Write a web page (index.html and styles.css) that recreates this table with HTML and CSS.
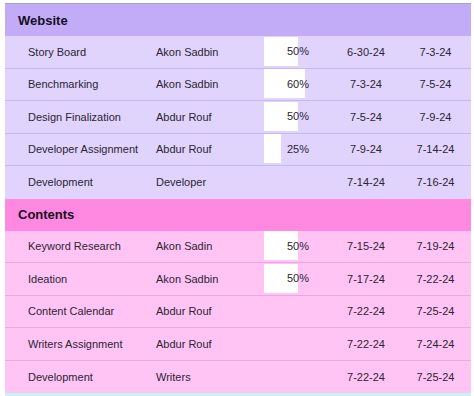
FILE: index.html
```html
<!DOCTYPE html>
<html>
<head>
<meta charset="utf-8">
<link rel="stylesheet" href="styles.css">
</head>
<body>
<div class="sheet">
  <section class="group website">
    <div class="group-head">Website</div>
    <div class="row"><span class="task">Story Board</span><span class="owner">Akon Sadbin</span><span class="prog"><span class="bar" style="width:50%"></span><span class="pct">50%</span></span><span class="date">6-30-24</span><span class="date">7-3-24</span></div>
    <div class="row"><span class="task">Benchmarking</span><span class="owner">Akon Sadbin</span><span class="prog"><span class="bar" style="width:60%"></span><span class="pct">60%</span></span><span class="date">7-3-24</span><span class="date">7-5-24</span></div>
    <div class="row"><span class="task">Design Finalization</span><span class="owner">Abdur Rouf</span><span class="prog"><span class="bar" style="width:50%"></span><span class="pct">50%</span></span><span class="date">7-5-24</span><span class="date">7-9-24</span></div>
    <div class="row"><span class="task">Developer Assignment</span><span class="owner">Abdur Rouf</span><span class="prog"><span class="bar" style="width:25%"></span><span class="pct">25%</span></span><span class="date">7-9-24</span><span class="date">7-14-24</span></div>
    <div class="row"><span class="task">Development</span><span class="owner">Developer</span><span class="prog"></span><span class="date">7-14-24</span><span class="date">7-16-24</span></div>
  </section>
  <section class="group contents">
    <div class="group-head">Contents</div>
    <div class="row"><span class="task">Keyword Research</span><span class="owner">Akon Sadin</span><span class="prog"><span class="bar" style="width:50%"></span><span class="pct">50%</span></span><span class="date">7-15-24</span><span class="date">7-19-24</span></div>
    <div class="row"><span class="task">Ideation</span><span class="owner">Akon Sadbin</span><span class="prog"><span class="bar" style="width:50%"></span><span class="pct">50%</span></span><span class="date">7-17-24</span><span class="date">7-22-24</span></div>
    <div class="row"><span class="task">Content Calendar</span><span class="owner">Abdur Rouf</span><span class="prog"></span><span class="date">7-22-24</span><span class="date">7-25-24</span></div>
    <div class="row"><span class="task">Writers Assignment</span><span class="owner">Abdur Rouf</span><span class="prog"></span><span class="date">7-22-24</span><span class="date">7-24-24</span></div>
    <div class="row"><span class="task">Development</span><span class="owner">Writers</span><span class="prog"></span><span class="date">7-22-24</span><span class="date">7-25-24</span></div>
  </section>
  <div class="next"></div>
</div>
</body>
</html>
```

FILE: styles.css
```css
html, body {
  margin: 0;
  padding: 0;
  background: #ffffff;
}
body {
  font-family: "Liberation Sans", Arial, sans-serif;
  color: #2a2434;
  width: 474px;
  height: 396px;
  overflow: hidden;
}
.sheet {
  margin: 0 3px 0 5px;
  padding-top: 3px;
}
.group-head {
  height: 33px;
  box-sizing: border-box;
  padding-left: 13px;
  display: flex;
  align-items: center;
  font-size: 13px;
  font-weight: bold;
  color: #16101e;
}
.website .group-head {
  background: #c2acf8;
  border-top: 1px solid #a9a4b4;
}
.contents .group-head {
  background: #ff88e0;
  height: 32px;
}
.row {
  display: grid;
  grid-template-columns: 128px 108px 68px 68px 71px;
  padding-left: 23px;
  height: 32.5px;
  box-sizing: border-box;
  align-items: center;
  font-size: 11px;
}
.website .row {
  background: #e0d4fc;
  border-bottom: 1px solid #c8b8f0;
}
.website .row:last-child {
  border-bottom: none;
}
.contents .row {
  background: #ffc4f4;
  border-bottom: 1px solid #f0a6e2;
}
.contents .row:last-child {
  border-bottom: none;
}
.prog {
  position: relative;
  height: 29px;
  display: flex;
  align-items: center;
  justify-content: center;
  margin-top: -1px;
}
.bar {
  position: absolute;
  left: 0;
  top: 0;
  bottom: 0;
  background: #ffffff;
}
.pct {
  position: relative;
}
.date {
  text-align: center;
}
.next {
  height: 4px;
  background: #c9f3ee;
}
```
